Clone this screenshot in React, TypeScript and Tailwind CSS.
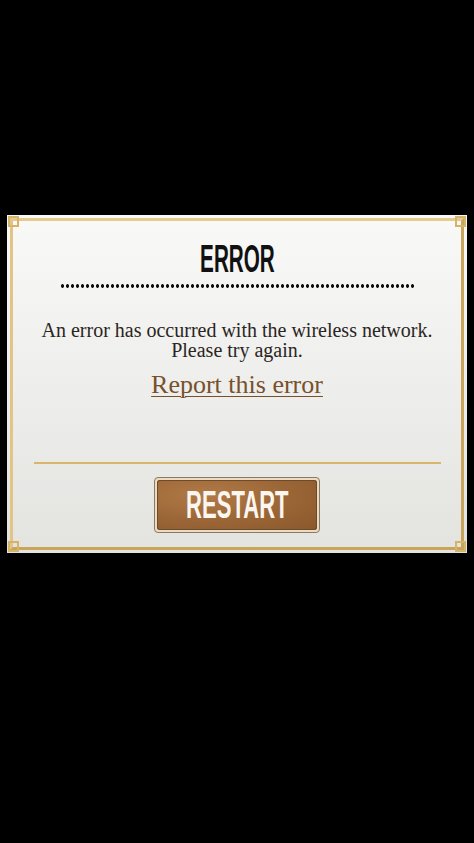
import React from 'react';

const condensed = { fontFamily: '"Liberation Sans Narrow", "Liberation Sans", Arial, sans-serif' };
const serif = { fontFamily: '"Liberation Serif", "Times New Roman", serif' };

function Corner({ pos }: { pos: string }) {
  return <span className={`absolute h-[11px] w-[11px] border-2 border-[#d6b36a] ${pos}`} />;
}

export default function App() {
  return (
    <div className="min-h-[843px] w-full bg-black pt-[215px]">
      <div className="ml-[7px] h-[338px] w-[460px] bg-gradient-to-b from-[#f9f9f8] to-[#e3e3e0] p-[3px]">
        <div className="relative flex h-full flex-col items-center border-[3px] border-t-[#e6c98c] border-l-[#e3c487] border-r-[#c9a55c] border-b-[#c9a55c]">
          <Corner pos="-left-[5px] -top-[5px]" />
          <Corner pos="-right-[5px] -top-[5px]" />
          <Corner pos="-left-[5px] -bottom-[5px]" />
          <Corner pos="-right-[5px] -bottom-[5px]" />

          <h1
            className="mt-[18px] inline-block scale-x-[0.53] text-[39px] leading-[39px] font-bold text-[#111]"
            style={condensed}
          >
            ERROR
          </h1>

          {/* dotted rule under the title */}
          <div className="mt-[6px] h-[4px] w-[354px] bg-[radial-gradient(circle,#111_1.5px,transparent_2px)] bg-[length:5px_4px]" />

          <p className="mt-[32px] text-center text-[20px] leading-[20px] text-[#2a2522]" style={serif}>
            An error has occurred with the wireless network.
            <br />
            Please try again.
          </p>

          <a
            className="mt-[10px] text-[26px] leading-[30px] text-[#78512b] underline decoration-1 underline-offset-[3px]"
            style={serif}
          >
            Report this error
          </a>

          <div className="mt-[62px] h-[2px] w-[407px] bg-[#d8b66c]" />

          <button className="mt-[13px] h-[56px] w-[166px] rounded-[4px] border border-[#8a7965] bg-[#eadbc2] p-[2px]">
            <span className="flex h-full w-full items-center justify-center rounded-[3px] bg-[radial-gradient(ellipse_at_30%_30%,#b17a47,#9a6536_55%,#8a582c)] shadow-[inset_0_0_0_1px_#6f4a2a]">
              <span
                className="inline-block scale-x-[0.58] text-[38px] leading-[38px] font-bold text-[#fbf7f0]"
                style={condensed}
              >
                RESTART
              </span>
            </span>
          </button>
        </div>
      </div>
    </div>
  );
}
